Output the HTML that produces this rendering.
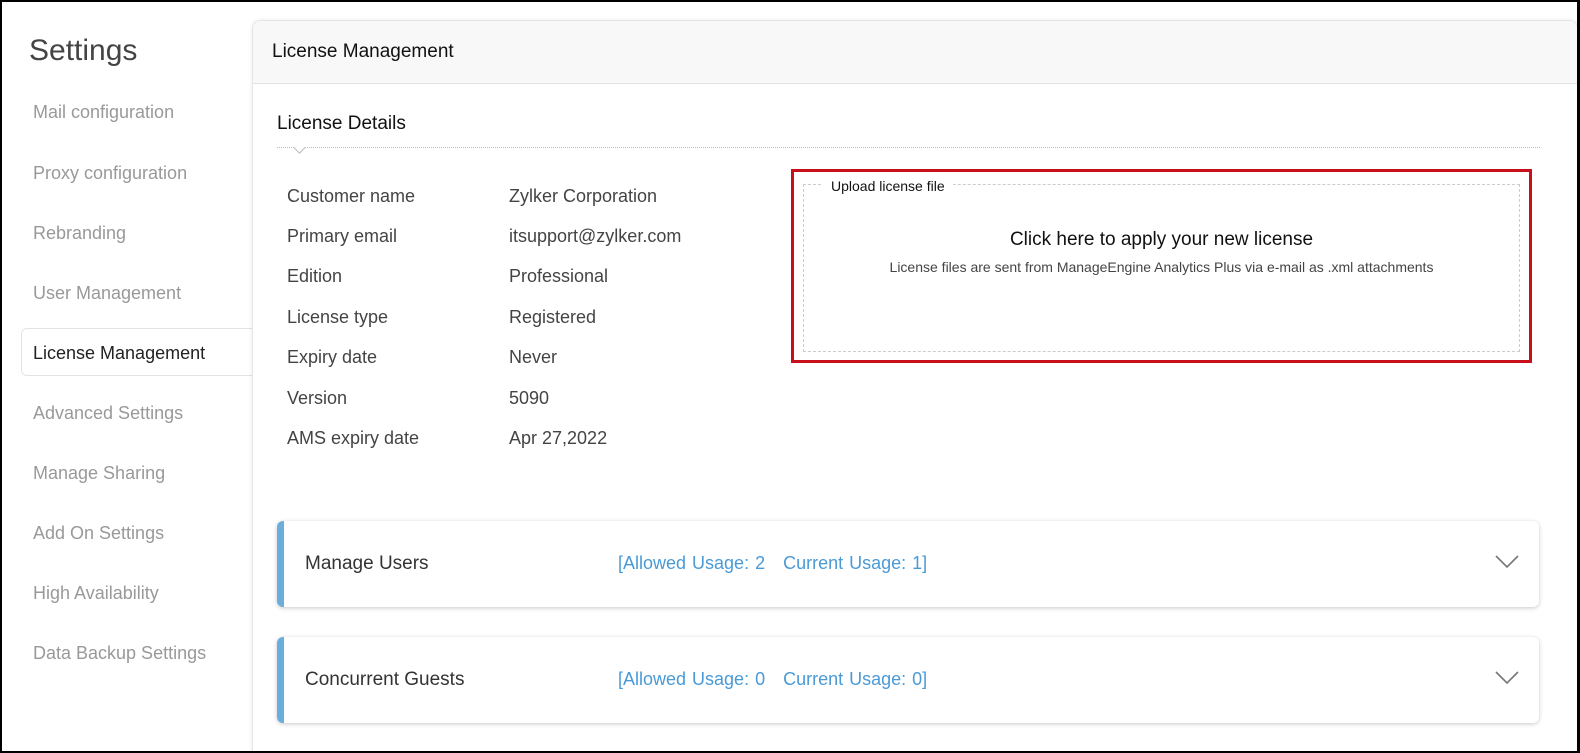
<!DOCTYPE html>
<html><head><style>
*{box-sizing:border-box;margin:0;padding:0}
body{width:1580px;height:753px;background:#000;font-family:"Liberation Sans",sans-serif;overflow:hidden;position:relative}
#page{position:absolute;left:2px;top:2px;width:1575px;height:749px;background:#fff;overflow:hidden}
.abs{position:absolute}
.side{color:#999;font-size:18px;left:31px}
.panel{left:250px;top:18px;width:1326px;height:760px;border:1px solid #e6e6e6;border-radius:8px;box-shadow:0 0 4px rgba(0,0,0,.08);background:#fff;overflow:hidden}
.ph{height:63px;background:#f8f8f8;border-bottom:1px solid #e3e3e3;font-size:19px;color:#111;padding:20px 0 0 19px}
.lbl{left:285px;font-size:18px;color:#444}
.val{left:507px;font-size:18px;color:#444}
.card{left:275px;width:1262px;height:86px;background:#fff;border-radius:6px;box-shadow:0 1px 4px rgba(0,0,0,.22);border-left:7px solid #6aaedb}
.card .t{position:absolute;left:21px;top:32px;font-size:19px;color:#333}
.card .u{position:absolute;left:334px;top:32px;font-size:18px;color:#4a9ad6;word-spacing:1px}
.card svg{position:absolute;right:20px;top:34px}
</style></head><body><div id="page">
<div class="abs" style="left:27px;top:32px;font-size:30px;color:#444">Settings</div>
<div class="abs side" style="top:100px">Mail configuration</div>
<div class="abs side" style="top:161px">Proxy configuration</div>
<div class="abs side" style="top:221px">Rebranding</div>
<div class="abs side" style="top:281px">User Management</div>
<div class="abs" style="left:19px;top:326px;width:240px;height:48px;border:1px solid #e3e3e3;border-radius:6px;background:#fff"></div>
<div class="abs side" style="top:341px;color:#222">License Management</div>
<div class="abs side" style="top:401px">Advanced Settings</div>
<div class="abs side" style="top:461px">Manage Sharing</div>
<div class="abs side" style="top:521px">Add On Settings</div>
<div class="abs side" style="top:581px">High Availability</div>
<div class="abs side" style="top:641px">Data Backup Settings</div>

<div class="abs panel"><div class="ph">License Management</div></div>
<div class="abs" style="left:275px;top:111px;font-size:19px;color:#111">License Details</div>
<div class="abs" style="left:275px;top:145px;width:1263px;border-top:1px dotted #bbb"></div>
<div class="abs" style="left:293px;top:141px;width:9px;height:9px;background:#fff;border-right:1px solid #bbb;border-bottom:1px solid #bbb;transform:rotate(45deg)"></div>

<div class="abs lbl" style="top:184px">Customer name</div><div class="abs val" style="top:184px">Zylker Corporation</div>
<div class="abs lbl" style="top:224px">Primary email</div><div class="abs val" style="top:224px">itsupport@zylker.com</div>
<div class="abs lbl" style="top:264px">Edition</div><div class="abs val" style="top:264px">Professional</div>
<div class="abs lbl" style="top:305px">License type</div><div class="abs val" style="top:305px">Registered</div>
<div class="abs lbl" style="top:345px">Expiry date</div><div class="abs val" style="top:345px">Never</div>
<div class="abs lbl" style="top:386px">Version</div><div class="abs val" style="top:386px">5090</div>
<div class="abs lbl" style="top:426px">AMS expiry date</div><div class="abs val" style="top:426px">Apr 27,2022</div>

<div class="abs" style="left:789px;top:167px;width:741px;height:194px;border:3px solid #c8101a"></div>
<div class="abs" style="left:801px;top:182px;width:717px;height:168px;border:1px dashed #ccc"></div>
<div class="abs" style="left:821px;top:176px;padding:0 8px;background:#fff;font-size:14px;color:#111">Upload license file</div>
<div class="abs" style="left:801px;top:227px;width:717px;text-align:center;font-size:19px;color:#111">Click here to apply your new license</div>
<div class="abs" style="left:801px;top:257px;width:717px;text-align:center;font-size:14px;color:#444">License files are sent from ManageEngine Analytics Plus via e-mail as .xml attachments</div>

<div class="abs card" style="top:519px"><div class="t">Manage Users</div><div class="u">[Allowed Usage: 2 &nbsp; Current Usage: 1]</div><svg width="24" height="14"><path d="M1 1L12 12L23 1" fill="none" stroke="#777" stroke-width="1.6"/></svg></div>
<div class="abs card" style="top:635px"><div class="t">Concurrent Guests</div><div class="u">[Allowed Usage: 0 &nbsp; Current Usage: 0]</div><svg width="24" height="14"><path d="M1 1L12 12L23 1" fill="none" stroke="#777" stroke-width="1.6"/></svg></div>
</div></body></html>
